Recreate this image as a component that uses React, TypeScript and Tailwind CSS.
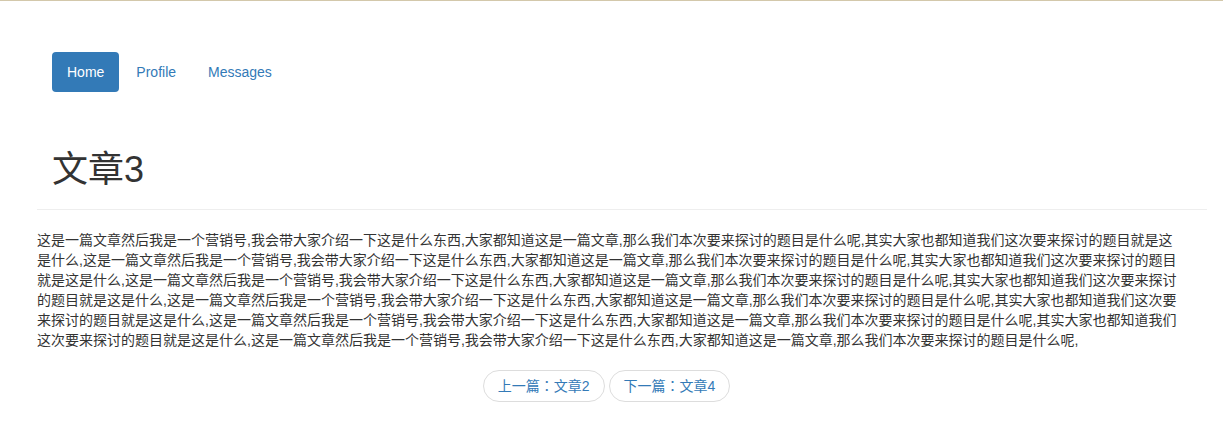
import React from 'react';

const unit =
  '这是一篇文章然后我是一个营销号,我会带大家介绍一下这是什么东西,大家都知道这是一篇文章,那么我们本次要来探讨的题目是什么呢,其实大家也都知道我们这次要来探讨的题目就是这是什么,';
const tail =
  '这是一篇文章然后我是一个营销号,我会带大家介绍一下这是什么东西,大家都知道这是一篇文章,那么我们本次要来探讨的题目是什么呢,';

const body = unit.repeat(5) + tail;

export default function App() {
  return (
    <div className="min-h-[427px] bg-white border-t border-[#d3c8ab] text-[14px] leading-[20px] text-[#333] font-['Liberation_Sans','Noto_Sans_CJK_SC',sans-serif]">
      <div className="pl-[37px] pr-[16px]">
        <div className="px-[15px] pt-[51px] pb-[9px] border-b border-[#eee]">
          <ul className="flex gap-[2px]">
            <li>
              <a className="block rounded-[4px] bg-[#337ab7] px-[15px] py-[10px] text-white">Home</a>
            </li>
            <li>
              <a className="block rounded-[4px] px-[15px] py-[10px] text-[#337ab7]">Profile</a>
            </li>
            <li>
              <a className="block rounded-[4px] px-[15px] py-[10px] text-[#337ab7]">Messages</a>
            </li>
          </ul>
          <h1 className="mt-[58px] mb-[10px] text-[36px] leading-[40px] font-normal text-[#333]">文章3</h1>
        </div>

        <p className="mt-[20px] w-[1145px] break-all">{body}</p>

        <div className="mt-[20px] flex justify-center gap-[4px] pr-[31px] font-['Liberation_Sans','Noto_Sans_CJK_TC',sans-serif]">
          <a className="rounded-full border border-[#ddd] bg-white px-[14px] py-[5px] text-[#337ab7]">上一篇：文章2</a>
          <a className="rounded-full border border-[#ddd] bg-white px-[14px] py-[5px] text-[#337ab7]">下一篇：文章4</a>
        </div>
      </div>
    </div>
  );
}
